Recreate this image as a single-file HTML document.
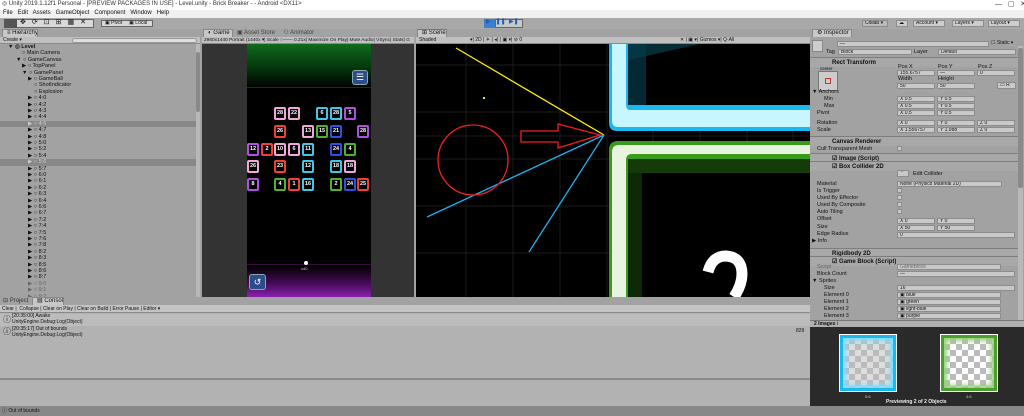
<!DOCTYPE html>
<html><head><meta charset="utf-8"><style>
*{margin:0;padding:0;box-sizing:border-box}
body{width:1024px;height:416px;overflow:hidden;background:#a2a2a2;font-family:"Liberation Sans",sans-serif;font-size:6px;color:#111;position:relative}
.a{position:absolute}
.t{position:absolute;white-space:nowrap;line-height:7px}
.tab{position:absolute;height:8px;background:#c8c8c8;border:1px solid #888;border-bottom:none;font-size:6px;line-height:7px;padding-left:4px;white-space:nowrap;overflow:hidden}
.bar{position:absolute;background:#c0c0c0;border-bottom:1px solid #8a8a8a}
.row{position:absolute;left:0;width:196px;height:6.4px;font-size:5.5px;line-height:6.4px;white-space:nowrap}
.row.sel{background:#888}
.brick{position:absolute;width:12px;height:13px;border:2px solid;border-radius:2px;background:#000;color:#fff;font-size:5.5px;font-weight:bold;text-align:center;line-height:9px}
.f{position:absolute;height:6px;background:#c9c9c9;border:1px solid #8c8c8c;font-size:5px;line-height:5px;padding-left:2px;white-space:nowrap;overflow:hidden}
.ins{position:absolute;left:812px;font-size:5.5px;white-space:nowrap;line-height:6px}
.hd{position:absolute;left:810px;width:208px;height:10px;background:#a8a8a8;border-top:1px solid #7e7e7e;font-weight:bold;font-size:6px;line-height:10px;padding-left:22px;white-space:nowrap}
</style></head><body>
<div class="a" style="left:0;top:0;width:1024px;height:10px;background:#fff"></div>
<div class="t" style="left:2px;top:1px;font-size:6px;color:#333">◎ Unity 2019.1.12f1 Personal - [PREVIEW PACKAGES IN USE] - Level.unity - Brick Breaker - - Android &lt;DX11&gt;</div>
<div class="t" style="left:995px;top:1px;font-size:7px;color:#333">—&nbsp;&nbsp;&nbsp;▢&nbsp;&nbsp;&nbsp;✕</div>
<div class="a" style="left:0;top:10px;width:1024px;height:8px;background:#f0f0f0"></div>
<div class="t" style="left:3px;top:10px;font-size:6px">File&nbsp;&nbsp; Edit&nbsp;&nbsp; Assets&nbsp;&nbsp; GameObject&nbsp;&nbsp; Component&nbsp;&nbsp; Window&nbsp;&nbsp; Help</div>
<div class="a" style="left:0;top:18px;width:1024px;height:11px;background:#a8a8a8"></div>
<div class="a" style="left:4px;top:19px;width:90px;height:9px;background:#d8d8d8;border:1px solid #666"></div>
<div class="a" style="left:4px;top:19px;width:13px;height:9px;background:#555"></div>
<div class="t" style="left:20px;top:19px;font-size:7px;letter-spacing:6px">✥⟳⊡⊞▦✕</div>
<div class="a" style="left:101px;top:20px;width:52px;height:7px;background:#d8d8d8;border:1px solid #666"></div>
<div class="t" style="left:105px;top:20px;font-size:5px">▣ Pivot&nbsp;&nbsp;&nbsp;&nbsp; ▣ Local</div>
<div class="a" style="left:484px;top:19px;width:11px;height:9px;background:#3a7fd0"></div>
<div class="a" style="left:495px;top:19px;width:28px;height:9px;background:#c8c8c8;border:1px solid #666"></div>
<div class="t" style="left:486px;top:19px;font-size:6px;color:#1a5fb0">▶&nbsp;&nbsp; ❚❚&nbsp; ▶❚</div>
<div class="f" style="left:862px;top:20px;width:26px;height:7px;background:#bbb">Collab ▾</div>
<div class="f" style="left:896px;top:20px;width:12px;height:7px;background:#ccc">☁</div>
<div class="f" style="left:913px;top:20px;width:32px;height:7px;background:#ccc">Account ▾</div>
<div class="f" style="left:952px;top:20px;width:32px;height:7px;background:#ccc">Layers ▾</div>
<div class="f" style="left:988px;top:20px;width:32px;height:7px;background:#ccc">Layout ▾</div>

<div class="tab" style="left:2px;top:29px;width:36px">≡ Hierarchy</div>
<div class="bar" style="left:0;top:37px;width:200px;height:7px"></div>
<div class="t" style="left:3px;top:37px;font-size:5px">Create ▾</div>
<div class="a" style="left:72px;top:38px;width:125px;height:5px;background:#ddd;border-radius:3px;border:1px solid #999"></div>
<div class="a" style="left:0;top:44px;width:200px;height:253px;background:#a2a2a2;overflow:hidden">
<div class="a" style="left:196px;top:0;width:4px;height:253px;background:#b8b8b8"></div>
<div class="a" style="left:196px;top:8px;width:4px;height:60px;background:#8a8a8a;border-radius:2px"></div>
<div class="row" style="top:0px;padding-left:8px;font-weight:bold">▼ ◎ Level</div>
<div class="row" style="top:6.4px;padding-left:22px">○ Main Camera</div>
<div class="row" style="top:12.8px;padding-left:16px">▼ ○ GameCanvas</div>
<div class="row" style="top:19.2px;padding-left:22px">▶ ○ TopPanel</div>
<div class="row" style="top:25.6px;padding-left:22px">▼ ○ GamePanel</div>
<div class="row" style="top:32px;padding-left:28px">▶ ○ GameBall</div>
<div class="row" style="top:38.4px;padding-left:34px">○ ShotIndicator</div>
<div class="row" style="top:44.8px;padding-left:34px">○ Explosion</div>
<div class="row" style="top:51.2px;padding-left:28px">▶ ○ 4:0</div>
<div class="row" style="top:57.6px;padding-left:28px">▶ ○ 4:2</div>
<div class="row" style="top:64px;padding-left:28px">▶ ○ 4:3</div>
<div class="row" style="top:70.4px;padding-left:28px">▶ ○ 4:4</div>
<div class="row sel" style="top:76.8px;padding-left:28px;color:#ccc">▶ ○ 4:6</div>
<div class="row" style="top:83.2px;padding-left:28px">▶ ○ 4:7</div>
<div class="row" style="top:89.6px;padding-left:28px">▶ ○ 4:8</div>
<div class="row" style="top:96px;padding-left:28px">▶ ○ 5:0</div>
<div class="row" style="top:102.4px;padding-left:28px">▶ ○ 5:2</div>
<div class="row" style="top:108.8px;padding-left:28px">▶ ○ 5:4</div>
<div class="row sel" style="top:115.2px;padding-left:28px;color:#ccc">▶ ○ 5:6</div>
<div class="row" style="top:121.6px;padding-left:28px">▶ ○ 5:7</div>
<div class="row" style="top:128px;padding-left:28px">▶ ○ 6:0</div>
<div class="row" style="top:134.4px;padding-left:28px">▶ ○ 6:1</div>
<div class="row" style="top:140.8px;padding-left:28px">▶ ○ 6:2</div>
<div class="row" style="top:147.2px;padding-left:28px">▶ ○ 6:3</div>
<div class="row" style="top:153.6px;padding-left:28px">▶ ○ 6:4</div>
<div class="row" style="top:160px;padding-left:28px">▶ ○ 6:6</div>
<div class="row" style="top:166.4px;padding-left:28px">▶ ○ 6:7</div>
<div class="row" style="top:172.8px;padding-left:28px">▶ ○ 7:2</div>
<div class="row" style="top:179.2px;padding-left:28px">▶ ○ 7:4</div>
<div class="row" style="top:185.6px;padding-left:28px">▶ ○ 7:5</div>
<div class="row" style="top:192px;padding-left:28px">▶ ○ 7:6</div>
<div class="row" style="top:198.4px;padding-left:28px">▶ ○ 7:8</div>
<div class="row" style="top:204.8px;padding-left:28px">▶ ○ 8:2</div>
<div class="row" style="top:211.2px;padding-left:28px">▶ ○ 8:3</div>
<div class="row" style="top:217.6px;padding-left:28px">▶ ○ 8:5</div>
<div class="row" style="top:224px;padding-left:28px">▶ ○ 8:6</div>
<div class="row" style="top:230.4px;padding-left:28px">▶ ○ 8:7</div>
<div class="row" style="top:236.8px;padding-left:28px;color:#666">▶ ○ 9:0</div>
<div class="row" style="top:243.2px;padding-left:28px;color:#666">▶ ○ 9:1</div>
<div class="row" style="top:249.6px;padding-left:28px;color:#666">▶ ○ 9:2</div>
</div>

<div class="tab" style="left:203px;top:29px;width:30px">◐ Game</div>
<div class="t" style="left:237px;top:30px;color:#444">▣ Asset Store&nbsp;&nbsp;&nbsp;&nbsp; ⚇ Animator</div>
<div class="bar" style="left:202px;top:37px;width:212px;height:7px"></div>
<div class="t" style="left:204px;top:37px;font-size:4.8px">2960x1440 Portrait (1440x ▾| Scale ○—— 0.21x| Maximize On Play| Mute Audio| VSync| Stats| G</div>
<div class="a" style="left:202px;top:44px;width:212px;height:253px;background:#333"></div>
<div class="a" style="left:247px;top:44px;width:124px;height:253px;background:#000"></div>
<div class="a" style="left:247px;top:44px;width:124px;height:44px;background:linear-gradient(#0f6b1c,#063a0e 50%,#000)"></div>
<div class="a" style="left:247px;top:87px;width:124px;height:1px;background:#0c3a12"></div>
<div class="a" style="left:352px;top:70px;width:16px;height:15px;background:#2c4c8c;border:1px solid #8aa;border-radius:3px;color:#fff;font-size:9px;line-height:12px;text-align:center">☰</div>
<div class="a" style="left:247px;top:264px;width:124px;height:1px;background:#3a0a40"></div>
<div class="a" style="left:247px;top:266px;width:124px;height:31px;background:linear-gradient(#000,#4a0d60 60%,#8c1fb0)"></div>
<div class="a" style="left:304px;top:261px;width:4px;height:4px;border-radius:50%;background:#fff"></div>
<div class="t" style="left:301px;top:265px;font-size:4px;color:#ccc">x40</div>
<div class="a" style="left:249px;top:274px;width:17px;height:16px;background:#2c4c8c;border:1px solid #8aa;border-radius:3px;color:#fff;font-size:9px;line-height:14px;text-align:center">↺</div>
<div class="brick" style="left:274px;top:107px;border-color:#f0a8d8">28</div>
<div class="brick" style="left:288px;top:107px;border-color:#f0a8d8">22</div>
<div class="brick" style="left:316px;top:107px;border-color:#3cc8e8">6</div>
<div class="brick" style="left:330px;top:107px;border-color:#3cc8e8">28</div>
<div class="brick" style="left:344px;top:107px;border-color:#b050e0">5</div>
<div class="brick" style="left:274px;top:125px;border-color:#f04030">26</div>
<div class="brick" style="left:302px;top:125px;border-color:#f0a8d8">13</div>
<div class="brick" style="left:316px;top:125px;border-color:#50b030">15</div>
<div class="brick" style="left:330px;top:125px;border-color:#3050e0">21</div>
<div class="brick" style="left:357px;top:125px;border-color:#b050e0">28</div>
<div class="brick" style="left:247px;top:143px;border-color:#b050e0">12</div>
<div class="brick" style="left:261px;top:143px;border-color:#f04030">2</div>
<div class="brick" style="left:274px;top:143px;border-color:#f0a8d8">10</div>
<div class="brick" style="left:288px;top:143px;border-color:#f0a8d8">6</div>
<div class="brick" style="left:302px;top:143px;border-color:#3cc8e8">11</div>
<div class="brick" style="left:330px;top:143px;border-color:#3050e0">24</div>
<div class="brick" style="left:344px;top:143px;border-color:#50b030">4</div>
<div class="brick" style="left:247px;top:160px;border-color:#f0a8d8">26</div>
<div class="brick" style="left:274px;top:160px;border-color:#f04030">23</div>
<div class="brick" style="left:302px;top:160px;border-color:#3cc8e8">12</div>
<div class="brick" style="left:330px;top:160px;border-color:#3cc8e8">18</div>
<div class="brick" style="left:344px;top:160px;border-color:#f0a8d8">18</div>
<div class="brick" style="left:247px;top:178px;border-color:#b050e0">8</div>
<div class="brick" style="left:274px;top:178px;border-color:#50b030">4</div>
<div class="brick" style="left:288px;top:178px;border-color:#f04030">1</div>
<div class="brick" style="left:302px;top:178px;border-color:#3cc8e8">16</div>
<div class="brick" style="left:330px;top:178px;border-color:#50b030">2</div>
<div class="brick" style="left:344px;top:178px;border-color:#3050e0">24</div>
<div class="brick" style="left:357px;top:178px;border-color:#f04030">25</div>

<div class="a" style="left:414px;top:29px;width:396px;height:268px;background:#a2a2a2"></div>
<div class="tab" style="left:417px;top:29px;width:30px;border-top:1px solid #3a7fd0">⊞ Scene</div>
<div class="bar" style="left:416px;top:37px;width:394px;height:7px"></div>
<div class="t" style="left:419px;top:37px;font-size:5px">Shaded</div>
<div class="t" style="left:470px;top:37px;font-size:5px">▾| 2D | ☀ | ◂) | ▣ ▾| ⊘ 0</div>
<div class="t" style="left:680px;top:37px;font-size:5px">✕ | ▣ ▾| Gizmos ▾| Q·All</div>
<svg class="a" style="left:416px;top:44px" width="394" height="253" viewBox="416 44 394 253">
<rect x="416" y="44" width="394" height="253" fill="#000"/>
<g stroke="#262626" stroke-width="0.7">
<line x1="466" y1="44" x2="466" y2="297"/><line x1="513" y1="44" x2="513" y2="297"/><line x1="560" y1="44" x2="560" y2="297"/><line x1="607" y1="44" x2="607" y2="297"/><line x1="653" y1="44" x2="653" y2="297"/><line x1="700" y1="44" x2="700" y2="297"/><line x1="747" y1="44" x2="747" y2="297"/><line x1="793" y1="44" x2="793" y2="297"/>
<line x1="416" y1="65" x2="810" y2="65"/><line x1="416" y1="112" x2="810" y2="112"/><line x1="416" y1="159" x2="810" y2="159"/><line x1="416" y1="206" x2="810" y2="206"/><line x1="416" y1="253" x2="810" y2="253"/><line x1="416" y1="136" x2="810" y2="136"/>
</g>
<path d="M609 44 V123 Q609 131 617 131 H810 V105 H634 Q628 105 628 99 V44 Z" fill="#1ab8ee"/>
<path d="M612 44 V121 Q612 127 618 127 H810 V110 H630 Q626 110 626 104 V44 Z" fill="#c8f6ff"/>
<rect x="628" y="44" width="182" height="61" fill="#000"/>
<path d="M628 44 H700 L628 60 Z" fill="#0a4a5a" opacity=".6"/>
<rect x="628" y="44" width="18" height="61" fill="#063a48" opacity=".7"/>
<path d="M609 297 V150 Q609 141 618 141 H810 V159 H634 Q628 159 628 165 V297 Z" fill="#3a9a1a"/>
<path d="M612 297 V152 Q612 145 619 145 H810 V154 H632 Q626 154 626 160 V297 Z" fill="#e8f4e0"/>
<rect x="628" y="159" width="182" height="138" fill="#000"/>
<rect x="628" y="159" width="182" height="14" fill="#1a4a0a" opacity=".8"/>
<rect x="628" y="159" width="14" height="138" fill="#123a08" opacity=".7"/>
<path d="M708 272 Q712 256 726 256 Q742 257 742 274 Q742 285 734 297" stroke="#fff" stroke-width="11" fill="none"/>
<line x1="456" y1="48" x2="604" y2="135" stroke="#ffee00" stroke-width="1.3"/>
<rect x="483" y="97" width="2" height="2" fill="#ffee00"/>
<line x1="604" y1="135" x2="427" y2="217" stroke="#1ab0f0" stroke-width="1.3"/>
<line x1="604" y1="135" x2="529" y2="252" stroke="#1ab0f0" stroke-width="1.3"/>
<circle cx="473" cy="160" r="35" stroke="#ee2020" stroke-width="1.3" fill="none"/>
<path d="M521 131 H558 V124 L600 135 L558 148 V142 H521 Z" stroke="#ee2020" stroke-width="1.3" fill="none"/>
</svg>

<div class="a" style="left:810px;top:29px;width:214px;height:291px;background:#a2a2a2"></div>
<div class="tab" style="left:812px;top:29px;width:40px">⚙ Inspector</div>
<div class="a" style="left:1018px;top:46px;width:5px;height:274px;background:#b8b8b8"></div>
<div class="a" style="left:1018px;top:48px;width:5px;height:140px;background:#8a8a8a;border-radius:2px"></div>
<div class="a" style="left:812px;top:40px;width:11px;height:12px;background:#ccc;border:1px solid #888"></div>
<div class="f" style="left:837px;top:41px;width:152px">—</div>
<div class="t" style="left:991px;top:40px;font-size:5px">☐ Static ▾</div>
<div class="ins" style="left:826px;top:49px">Tag</div>
<div class="f" style="left:838px;top:49px;width:74px">Block</div>
<div class="ins" style="left:914px;top:49px">Layer</div>
<div class="f" style="left:938px;top:49px;width:78px">Default</div>
<div class="hd" style="top:57px">Rect Transform</div>
<div class="ins" style="left:820px;top:66px;font-size:4.5px">center</div>
<div class="a" style="left:818px;top:71px;width:20px;height:20px;background:#ccc;border:1px solid #777"></div>
<div class="a" style="left:825px;top:78px;width:6px;height:6px;border:1px solid #c33"></div>
<div class="ins" style="left:898px;top:64px">Pos X</div><div class="ins" style="left:938px;top:64px">Pos Y</div><div class="ins" style="left:978px;top:64px">Pos Z</div>
<div class="f" style="left:897px;top:70px;width:38px">155.6757</div><div class="f" style="left:937px;top:70px;width:38px">—</div><div class="f" style="left:977px;top:70px;width:38px">0</div>
<div class="ins" style="left:898px;top:76px">Width</div><div class="ins" style="left:938px;top:76px">Height</div>
<div class="f" style="left:897px;top:83px;width:38px">50</div><div class="f" style="left:937px;top:83px;width:38px">50</div>
<div class="f" style="left:997px;top:82px;width:19px;height:7px">▭ R</div>
<div class="ins" style="top:89px">▼ Anchors</div>
<div class="ins" style="left:824px;top:96px">Min</div><div class="ins" style="left:824px;top:103px">Max</div><div class="ins" style="left:817px;top:110px">Pivot</div>
<div class="ins" style="left:817px;top:120px">Rotation</div><div class="ins" style="left:817px;top:127px">Scale</div>
<div class="f" style="left:897px;top:96px;width:38px">X 0.5</div><div class="f" style="left:937px;top:96px;width:38px">Y 0.5</div>
<div class="f" style="left:897px;top:103px;width:38px">X 0.5</div><div class="f" style="left:937px;top:103px;width:38px">Y 0.5</div>
<div class="f" style="left:897px;top:110px;width:38px">X 0.5</div><div class="f" style="left:937px;top:110px;width:38px">Y 0.5</div>
<div class="f" style="left:897px;top:120px;width:38px">X 0</div><div class="f" style="left:937px;top:120px;width:38px">Y 0</div><div class="f" style="left:977px;top:120px;width:38px">Z 0</div>
<div class="f" style="left:897px;top:127px;width:38px">X 1.556757</div><div class="f" style="left:937px;top:127px;width:38px">Y 1.988</div><div class="f" style="left:977px;top:127px;width:38px">Z 0</div>
<div class="hd" style="top:136px">Canvas Renderer</div>
<div class="ins" style="left:817px;top:146px">Cull Transparent Mesh</div>
<div class="f" style="left:897px;top:146px;width:5px;height:5px"></div>
<div class="hd" style="top:153px">☑ Image (Script)</div>
<div class="hd" style="top:161px">☑ Box Collider 2D</div>
<div class="f" style="left:897px;top:170px;width:12px;height:7px">⌃</div>
<div class="ins" style="left:913px;top:171px">Edit Collider</div>
<div class="ins" style="left:817px;top:181px">Material</div><div class="f" style="left:897px;top:181px;width:105px">None (Physics Material 2D)</div>
<div class="ins" style="left:817px;top:188px">Is Trigger</div><div class="f" style="left:897px;top:188px;width:5px;height:5px"></div>
<div class="ins" style="left:817px;top:195px">Used By Effector</div><div class="f" style="left:897px;top:195px;width:5px;height:5px"></div>
<div class="ins" style="left:817px;top:202px">Used By Composite</div><div class="f" style="left:897px;top:202px;width:5px;height:5px"></div>
<div class="ins" style="left:817px;top:209px">Auto Tiling</div><div class="f" style="left:897px;top:209px;width:5px;height:5px"></div>
<div class="ins" style="left:817px;top:216px">Offset</div><div class="f" style="left:897px;top:218px;width:38px">X 0</div><div class="f" style="left:937px;top:218px;width:38px">Y 0</div>
<div class="ins" style="left:817px;top:224px">Size</div><div class="f" style="left:897px;top:225px;width:38px">X 50</div><div class="f" style="left:937px;top:225px;width:38px">Y 50</div>
<div class="ins" style="left:817px;top:231px">Edge Radius</div><div class="f" style="left:897px;top:232px;width:118px">0</div>
<div class="ins" style="top:238px">▶ Info</div>
<div class="hd" style="top:248px">Rigidbody 2D</div>
<div class="hd" style="top:256px">☑ Game Block (Script)</div>
<div class="ins" style="left:817px;top:264px;color:#666">Script</div><div class="f" style="left:897px;top:264px;width:104px;color:#666">GameBlock</div>
<div class="ins" style="left:817px;top:271px">Block Count</div><div class="f" style="left:897px;top:271px;width:118px">—</div>
<div class="ins" style="top:278px">▼ Sprites</div>
<div class="ins" style="left:824px;top:285px">Size</div><div class="f" style="left:897px;top:285px;width:118px">16</div>
<div class="ins" style="left:824px;top:292px">Element 0</div><div class="f" style="left:897px;top:292px;width:104px">▣ blue</div>
<div class="ins" style="left:824px;top:299px">Element 1</div><div class="f" style="left:897px;top:299px;width:104px">▣ green</div>
<div class="ins" style="left:824px;top:306px">Element 2</div><div class="f" style="left:897px;top:306px;width:104px">▣ light-blue</div>
<div class="ins" style="left:824px;top:313px">Element 3</div><div class="f" style="left:897px;top:313px;width:104px">▣ purple</div>
<div class="a" style="left:810px;top:320px;width:214px;height:7px;background:#b0b0b0;border-top:1px solid #777;font-size:5px;font-weight:bold;padding-left:4px;line-height:6px">2 Images ⁝</div>
<div class="a" style="left:810px;top:327px;width:214px;height:79px;background:#2a2a2a"></div>
<div class="a" style="left:840px;top:335px;width:56px;height:56px;background:repeating-conic-gradient(#bbb 0 25%,#ddd 0 50%) 0 0/12px 12px;border:3px solid #1ab8ee;box-shadow:inset 0 0 5px 3px #7de0ff;outline:1px solid #fff"></div>
<div class="a" style="left:941px;top:335px;width:56px;height:56px;background:repeating-conic-gradient(#bbb 0 25%,#fff 0 50%) 0 0/12px 12px;border:3px solid #4aa02a;box-shadow:inset 0 0 5px 3px #9ad080;outline:1px solid #fff"></div>
<div class="t" style="left:865px;top:393px;font-size:4px;color:#ccc">5:6</div>
<div class="t" style="left:966px;top:393px;font-size:4px;color:#ccc">4:6</div>
<div class="t" style="left:886px;top:399px;font-size:5px;color:#eee;font-weight:bold">Previewing 2 of 2 Objects</div>

<div class="a" style="left:0;top:297px;width:810px;height:109px;background:#b2b2b2"></div>
<div class="a" style="left:0;top:297px;width:810px;height:8px;background:#a2a2a2"></div>
<div class="t" style="left:3px;top:298px;color:#333">⊟ Project</div>
<div class="tab" style="left:32px;top:297px;width:32px">▤ Console</div>
<div class="a" style="left:0;top:305px;width:810px;height:8px;background:#c4c4c4;border-bottom:1px solid #8a8a8a"></div>
<div class="t" style="left:2px;top:305px;font-size:5px;line-height:8px">Clear |&nbsp; Collapse | Clear on Play | Clear on Build | Error Pause | Editor ▾</div>
<div class="a" style="left:0;top:314px;width:810px;height:12px;background:#bcbcbc"></div>
<div class="t" style="left:3px;top:316px;font-size:8px">ⓘ</div>
<div class="t" style="left:12px;top:313px;font-size:5px;line-height:6px">[20:35:00] Awake<br>UnityEngine.Debug:Log(Object)</div>
<div class="t" style="left:3px;top:328px;font-size:8px">ⓘ</div>
<div class="t" style="left:12px;top:326px;font-size:5px;line-height:6px">[20:35:17] Out of bounds<br>UnityEngine.Debug:Log(Object)</div>
<div class="t" style="left:796px;top:328px;font-size:5px">829</div>
<div class="a" style="left:0;top:378px;width:810px;height:2px;background:#8a8a8a"></div>
<div class="a" style="left:0;top:406px;width:1024px;height:10px;background:#888"></div>
<div class="t" style="left:2px;top:407px;font-size:5px;line-height:8px">ⓘ Out of bounds</div>
</body></html>
